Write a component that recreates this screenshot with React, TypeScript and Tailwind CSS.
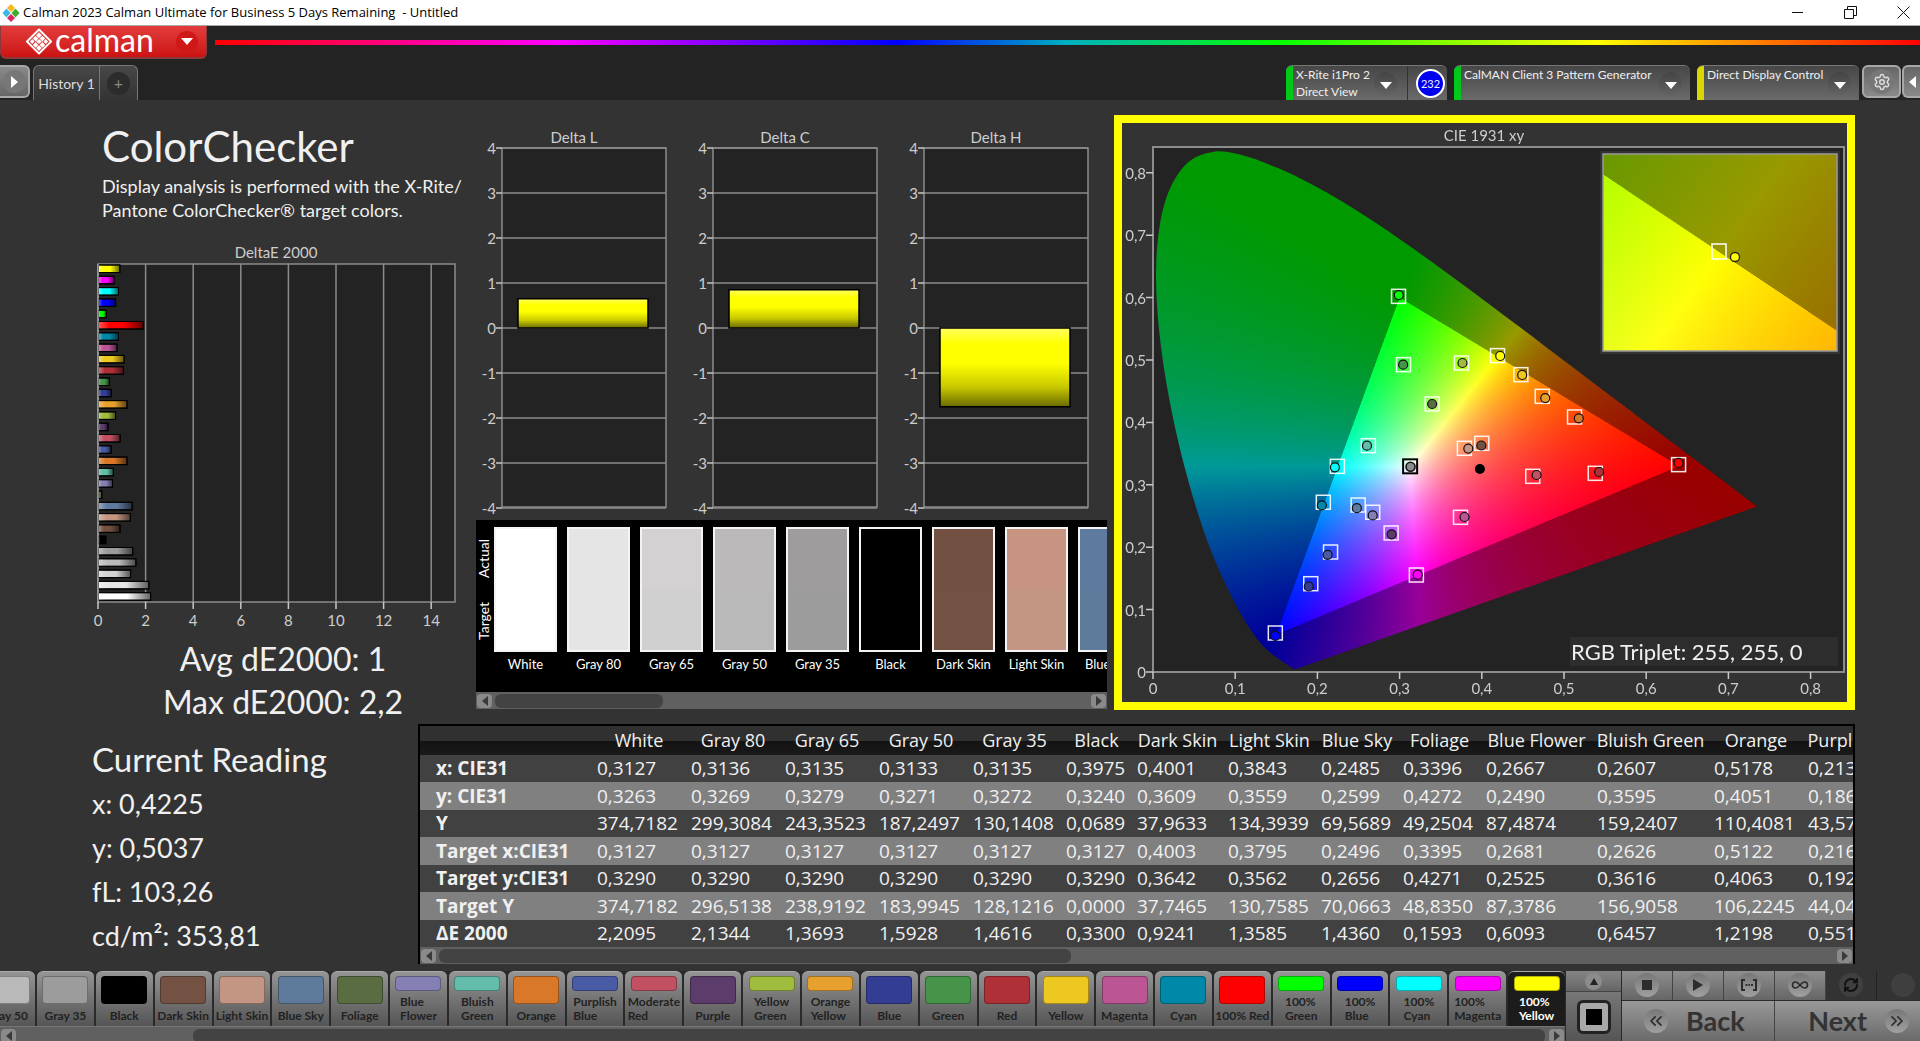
import { useEffect, useRef } from "react";
import { ChevronsLeft, ChevronsRight, Infinity as InfinityIcon, RefreshCw, Settings } from "lucide-react";

type Point = [number, number];

const CALIBRI = "font-['Lato',sans-serif]";
const SEGOE = "font-['Open_Sans',sans-serif]";

/* ---------- data ---------- */

const deltaE: [string, number][] = [
  ["#ffff00", 0.92], ["#ff00ff", 0.68], ["#00ffff", 0.86], ["#0000ff", 0.74], ["#00ff00", 0.35],
  ["#ff0000", 1.9], ["#0088a8", 0.86], ["#bb5593", 0.8], ["#edc820", 1.1], ["#b03038", 1.07],
  ["#46944a", 0.48], ["#333d94", 0.56], ["#e6a02e", 1.22], ["#a0bc3f", 0.74], ["#5c3c6a", 0.42],
  ["#c15162", 0.93], ["#4a5ba5", 0.5513], ["#d87828", 1.2198], ["#64bdaa", 0.6457], ["#8480b3", 0.6093],
  ["#596c42", 0.1593], ["#5e7a9e", 1.436], ["#c49682", 1.3585], ["#735142", 0.9241], ["#000000", 0.33],
  ["#9c9c9c", 1.4616], ["#bababa", 1.5928], ["#d2d2d2", 1.3693], ["#e6e6e6", 2.1344], ["#ffffff", 2.2095],
];

const swatches = [
  { name: "White", actual: "#ffffff", target: "#ffffff" },
  { name: "Gray 80", actual: "#e6e5e5", target: "#e5e5e5" },
  { name: "Gray 65", actual: "#d3d1d2", target: "#d0d0d0" },
  { name: "Gray 50", actual: "#bbb9ba", target: "#b9b9b9" },
  { name: "Gray 35", actual: "#9f9c9d", target: "#9c9c9c" },
  { name: "Black", actual: "#000000", target: "#000000" },
  { name: "Dark Skin", actual: "#735142", target: "#735244" },
  { name: "Light Skin", actual: "#c69481", target: "#c29682" },
  { name: "Blue Sky", actual: "#5e7a9f", target: "#5e7b9c" },
];

const columns = ["White", "Gray 80", "Gray 65", "Gray 50", "Gray 35", "Black", "Dark Skin", "Light Skin", "Blue Sky", "Foliage", "Blue Flower", "Bluish Green", "Orange", "Purplish Blue"];
const columnWidths = [94, 94, 94, 94, 93, 71, 91, 93, 82, 83, 111, 117, 94, 120];

const rows: [string, string[]][] = [
  ["x: CIE31", ["0,3127", "0,3136", "0,3135", "0,3133", "0,3135", "0,3975", "0,4001", "0,3843", "0,2485", "0,3396", "0,2667", "0,2607", "0,5178", "0,2131"]],
  ["y: CIE31", ["0,3263", "0,3269", "0,3279", "0,3271", "0,3272", "0,3240", "0,3609", "0,3559", "0,2599", "0,4272", "0,2490", "0,3595", "0,4051", "0,1861"]],
  ["Y", ["374,7182", "299,3084", "243,3523", "187,2497", "130,1408", "0,0689", "37,9633", "134,3939", "69,5689", "49,2504", "87,4874", "159,2407", "110,4081", "43,5713"]],
  ["Target x:CIE31", ["0,3127", "0,3127", "0,3127", "0,3127", "0,3127", "0,3127", "0,4003", "0,3795", "0,2496", "0,3395", "0,2681", "0,2626", "0,5122", "0,2161"]],
  ["Target y:CIE31", ["0,3290", "0,3290", "0,3290", "0,3290", "0,3290", "0,3290", "0,3642", "0,3562", "0,2656", "0,4271", "0,2525", "0,3616", "0,4063", "0,1921"]],
  ["Target Y", ["374,7182", "296,5138", "238,9192", "183,9945", "128,1216", "0,0000", "37,7465", "130,7585", "70,0663", "48,8350", "87,3786", "156,9058", "106,2245", "44,0413"]],
  ["ΔE 2000", ["2,2095", "2,1344", "1,3693", "1,5928", "1,4616", "0,3300", "0,9241", "1,3585", "1,4360", "0,1593", "0,6093", "0,6457", "1,2198", "0,5513"]],
];

const patches: [string, string][] = [
  ["Gray 50", "#b9b9b9"], ["Gray 35", "#9c9c9c"], ["Black", "#000000"], ["Dark Skin", "#735244"], ["Light Skin", "#c29682"],
  ["Blue Sky", "#5e7b9c"], ["Foliage", "#596c42"], ["Blue\nFlower", "#8480b3"], ["Bluish\nGreen", "#64bdaa"], ["Orange", "#d87828"],
  ["Purplish\nBlue", "#4a5ba5"], ["Moderate\nRed", "#c15162"], ["Purple", "#5c3c6a"], ["Yellow\nGreen", "#a0bc3f"], ["Orange\nYellow", "#e6a02e"],
  ["Blue", "#333d94"], ["Green", "#46944a"], ["Red", "#b03038"], ["Yellow", "#edc820"], ["Magenta", "#bb5593"],
  ["Cyan", "#0088a8"], ["100% Red", "#ff0000"], ["100%\nGreen", "#00ff00"], ["100%\nBlue", "#0000ff"], ["100%\nCyan", "#00ffff"],
  ["100%\nMagenta", "#ff00ff"], ["100%\nYellow", "#ffff00"],
];

/* target point, measured point, colour */
const markers: [Point, Point, string][] = [
  [[0.2987, 0.602], [0.299, 0.604], "#00ff00"],
  [[0.3048, 0.4925], [0.3043, 0.4925], "#46944a"],
  [[0.3753, 0.4952], [0.3765, 0.4952], "#a0bc3f"],
  [[0.4191, 0.507], [0.4224, 0.5064], "#ffff00"],
  [[0.4475, 0.4765], [0.4491, 0.476], "#edc820"],
  [[0.4735, 0.4418], [0.4772, 0.439], "#e6a02e"],
  [[0.5128, 0.4087], [0.518, 0.4065], "#d87828"],
  [[0.3396, 0.4295], [0.3396, 0.4295], "#596c42"],
  [[0.262, 0.3627], [0.2603, 0.3627], "#64bdaa"],
  [[0.3788, 0.3585], [0.3836, 0.358], "#c49682"],
  [[0.4, 0.3665], [0.3994, 0.363], "#735142"],
  [[0.2243, 0.3296], [0.2213, 0.328], "#00ffff"],
  [[0.462, 0.3136], [0.4667, 0.3157], "#c15162"],
  [[0.538, 0.3184], [0.5427, 0.3205], "#b03038"],
  [[0.6394, 0.3323], [0.6394, 0.335], "#ff0000"],
  [[0.2072, 0.272], [0.2054, 0.267], "#0088a8"],
  [[0.2496, 0.2676], [0.248, 0.2626], "#5e7a9e"],
  [[0.2673, 0.256], [0.2673, 0.251], "#8480b3"],
  [[0.2897, 0.2228], [0.2903, 0.2207], "#5c3c6a"],
  [[0.3741, 0.2479], [0.379, 0.2484], "#bb5593"],
  [[0.216, 0.1923], [0.2124, 0.1878], "#4a5ba5"],
  [[0.1919, 0.1415], [0.1895, 0.137], "#333d94"],
  [[0.3204, 0.1554], [0.322, 0.156], "#ff00ff"],
  [[0.1488, 0.0625], [0.1488, 0.058], "#0000ff"],
];

const locus: Point[] = [
  [0.1741, 0.005], [0.1733, 0.0048], [0.1714, 0.0051], [0.1689, 0.0069], [0.1644, 0.0109], [0.1566, 0.0177],
  [0.151, 0.0227], [0.144, 0.0297], [0.1355, 0.0399], [0.1241, 0.0578], [0.1096, 0.0868], [0.0913, 0.1327],
  [0.0687, 0.2007], [0.0454, 0.295], [0.0235, 0.4127], [0.0082, 0.5384], [0.0039, 0.6548], [0.0139, 0.7502],
  [0.0389, 0.812], [0.0743, 0.8338], [0.1142, 0.8262], [0.1547, 0.8059], [0.1929, 0.7816], [0.2296, 0.7543],
  [0.2658, 0.7243], [0.3016, 0.6923], [0.3373, 0.6589], [0.3731, 0.6245], [0.4087, 0.5896], [0.4441, 0.5547],
  [0.4788, 0.5202], [0.5125, 0.4866], [0.5448, 0.4544], [0.5752, 0.4242], [0.6029, 0.3965], [0.627, 0.3725],
  [0.6482, 0.3514], [0.6658, 0.334], [0.6915, 0.3083], [0.7079, 0.292], [0.719, 0.2809], [0.726, 0.274], [0.7347, 0.2653],
];

/* ---------- chromaticity chart ---------- */

const CIE_W = 725;
const CIE_H = 579;
const PLOT = { x: 31, y: 24, w: 691, h: 525 };
const cx = (x: number) => 31 + x * 822;
const cy = (y: number) => 549 - y * 624;
const INSET = { x: 481, y: 31, w: 234, h: 197, u: 0.4193, v: 0.5053, span: 0.05 };

function chroma(x: number, y: number): [number, number, number] {
  const X = x / y;
  const Z = (1 - x - y) / y;
  const r = 3.2406 * X - 1.5372 - 0.4986 * Z;
  const g = -0.9689 * X + 1.8758 + 0.0415 * Z;
  const b = 0.0557 * X - 0.204 + 1.057 * Z;
  const k = (Math.min(r, g, b) < 0 ? 153 : 255) / Math.max(r, g, b);
  return [Math.max(0, r * k), Math.max(0, g * k), Math.max(0, b * k)];
}

function paint(w: number, h: number, toXY: (px: number, py: number) => Point) {
  const s = 2;
  const off = document.createElement("canvas");
  off.width = w * s;
  off.height = h * s;
  const ctx = off.getContext("2d")!;
  const img = ctx.createImageData(w * s, h * s);
  for (let j = 0; j < h * s; j++) {
    for (let i = 0; i < w * s; i++) {
      const [x, y] = toXY((i + 0.5) / s, (j + 0.5) / s);
      const c = chroma(x, Math.max(y, 0.0005));
      const o = (j * w * s + i) * 4;
      img.data[o] = c[0];
      img.data[o + 1] = c[1];
      img.data[o + 2] = c[2];
      img.data[o + 3] = 255;
    }
  }
  ctx.putImageData(img, 0, 0);
  return off;
}

function GamutCanvas() {
  const ref = useRef<HTMLCanvasElement>(null);
  useEffect(() => {
    const ctx = ref.current!.getContext("2d")!;
    ctx.clearRect(0, 0, CIE_W, CIE_H);
    ctx.fillStyle = "#232323";
    ctx.fillRect(PLOT.x, PLOT.y, PLOT.w, PLOT.h);
    const p = locus.map(([x, y]) => [cx(x), cy(y)] as Point);
    ctx.save();
    ctx.beginPath();
    ctx.moveTo(p[0][0], p[0][1]);
    for (let i = 0; i < p.length - 1; i++) {
      const a = p[Math.max(0, i - 1)];
      const b = p[i];
      const c = p[i + 1];
      const d = p[Math.min(p.length - 1, i + 2)];
      ctx.bezierCurveTo(b[0] + (c[0] - a[0]) / 6, b[1] + (c[1] - a[1]) / 6, c[0] - (d[0] - b[0]) / 6, c[1] - (d[1] - b[1]) / 6, c[0], c[1]);
    }
    ctx.closePath();
    ctx.clip();
    ctx.drawImage(paint(CIE_W, CIE_H, (px, py) => [(px - 31) / 822, (549 - py) / 624]), 0, 0, CIE_W, CIE_H);
    ctx.restore();
    ctx.fillStyle = "#333333";
    ctx.fillRect(INSET.x - 3, INSET.y - 3, INSET.w + 6, INSET.h + 6);
    const zoomed = paint(INSET.w, INSET.h, (px, py) => [
      INSET.u + (px / INSET.w - 0.5) * INSET.span,
      INSET.v - (py / INSET.h - 0.5) * INSET.span,
    ]);
    ctx.drawImage(zoomed, INSET.x, INSET.y, INSET.w, INSET.h);
  }, []);
  return <canvas ref={ref} width={CIE_W} height={CIE_H} className="block w-full" />;
}

function CieChart() {
  const ticks = [0, 1, 2, 3, 4, 5, 6, 7, 8];
  return (
    <section className="relative border-8 border-[#ffff00] bg-[#333333]">
      <GamutCanvas />
      <svg viewBox="0 0 725 579" className={`absolute inset-0 h-full w-full ${CALIBRI}`} fill="#cdcdcd" fontSize="15">
        <text x="362" y="18" textAnchor="middle">CIE 1931 xy</text>
        <rect x="31" y="24" width="691" height="525" fill="none" stroke="#8c8c8c" strokeWidth="2" />
        {ticks.map((t) => (
          <g key={t}>
            <path d={`M${cx(t / 10)} 549v7M31 ${cy(t / 10)}h-7`} stroke="#c8c8c8" strokeWidth="1.5" />
            <text x={cx(t / 10)} y="571" textAnchor="middle">{t ? `0,${t}` : "0"}</text>
            <text x="24" y={cy(t / 10) + 6} textAnchor="end">{t ? `0,${t}` : "0"}</text>
          </g>
        ))}
        {markers.map(([t, m, c], i) => (
          <g key={i}>
            <rect x={cx(t[0]) - 7} y={cy(t[1]) - 7} width="14" height="14" fill="none" stroke="#fff" strokeOpacity="0.9" strokeWidth="1.5" />
            <circle cx={cx(m[0])} cy={cy(m[1])} r="4.5" fill={c} stroke="#111" strokeWidth="1.2" />
          </g>
        ))}
        <rect x={cx(0.3128) - 7} y={cy(0.3296) - 7} width="14" height="14" fill="none" stroke="#000" strokeWidth="2" />
        <circle cx={cx(0.3133)} cy={cy(0.329)} r="4.5" fill="#8c8c8c" stroke="#111" strokeWidth="1.6" />
        <circle cx={cx(0.3977)} cy={cy(0.3253)} r="5" fill="#000" />
        <rect x={INSET.x} y={INSET.y} width={INSET.w} height={INSET.h} fill="none" stroke="#9a9a9a" strokeWidth="1.5" />
        <rect x="590" y="121" width="14" height="15" fill="none" stroke="#fff" strokeWidth="1.5" />
        <circle cx="613" cy="134" r="4.5" fill="#ffff00" stroke="#222" strokeWidth="1.3" />
        <rect x="448" y="514" width="268" height="29" fill="#2d2d2d" />
        <text x="449" y="537" fontSize="22" fill="#f0f0f0">RGB Triplet: 255, 255, 0</text>
      </svg>
    </section>
  );
}

/* ---------- bar charts ---------- */

function DeltaEChart() {
  return (
    <svg viewBox="80 240 396 392" className={`block w-full ${CALIBRI}`} fill="#cdcdcd" fontSize="15">
      <defs>
        <linearGradient id="barShade">
          <stop offset="0" stopColor="#fff" stopOpacity="0.35" />
          <stop offset="0.25" stopColor="#fff" stopOpacity="0" />
          <stop offset="0.55" stopColor="#000" stopOpacity="0" />
          <stop offset="1" stopColor="#000" stopOpacity="0.6" />
        </linearGradient>
      </defs>
      <text x="276" y="259" textAnchor="middle">DeltaE 2000</text>
      <rect x="98" y="265" width="357" height="338" fill="#232323" stroke="#8c8c8c" strokeWidth="1.5" />
      {[0, 2, 4, 6, 8, 10, 12, 14].map((t) => (
        <g key={t}>
          <path d={`M${98 + t * 23.8} 265V603`} stroke="#8c8c8c" strokeWidth="1.5" />
          <path d={`M${98 + t * 23.8} 603v7`} stroke="#c8c8c8" strokeWidth="1.5" />
          <text x={98 + t * 23.8} y="627" textAnchor="middle">{t}</text>
        </g>
      ))}
      {deltaE.map(([c, v], i) => (
        <g key={i} stroke="#000" strokeWidth="1">
          <rect x="98.5" y={266 + i * 11.3} width={v * 23.8 - 0.5} height="7.5" fill={c} />
          <rect x="98.5" y={266 + i * 11.3} width={v * 23.8 - 0.5} height="7.5" fill="url(#barShade)" />
        </g>
      ))}
      <path d="M98 265V603" stroke="#9a9a9a" strokeWidth="1.5" />
    </svg>
  );
}

function DeltaCharts() {
  const charts: [string, number, number][] = [["Delta L", 0, 0.65], ["Delta C", 211, 0.85], ["Delta H", 422, -1.75]];
  return (
    <svg viewBox="476 120 638 400" className={`block w-full ${CALIBRI}`} fill="#cdcdcd" fontSize="15">
      <defs>
        <linearGradient id="yellowBar" x1="0" y1="0" x2="0" y2="1">
          <stop offset="0" stopColor="#ffff60" />
          <stop offset="0.2" stopColor="#ffff00" />
          <stop offset="0.45" stopColor="#ffff00" />
          <stop offset="0.75" stopColor="#c8c800" />
          <stop offset="1" stopColor="#6a6a00" />
        </linearGradient>
      </defs>
      {charts.map(([name, dx, v]) => (
        <g key={name} transform={`translate(${dx} 0)`}>
          <text x="574" y="143" textAnchor="middle">{name}</text>
          <rect x="502" y="148" width="164" height="359" fill="#232323" stroke="#8c8c8c" strokeWidth="1.5" />
          {[4, 3, 2, 1, 0, -1, -2, -3, -4].map((t) => (
            <g key={t}>
              <path d={`M502 ${328 - t * 45}H666`} stroke="#8c8c8c" strokeWidth="1.5" />
              <path d={`M496 ${328 - t * 45}h6`} stroke="#c8c8c8" strokeWidth="1.5" />
              <text x="496" y={334 - t * 45} textAnchor="end">{t}</text>
            </g>
          ))}
          <rect x="518" y={v > 0 ? 328 - v * 45 : 328} width="130" height={Math.abs(v) * 45} fill="url(#yellowBar)" stroke="#000" strokeWidth="1.5" />
        </g>
      ))}
    </svg>
  );
}

/* ---------- small parts ---------- */

function ArrowButton({ dir }: { dir: "left" | "right" }) {
  return (
    <button aria-label={`Scroll ${dir}`} className="grid h-[14px] w-[15px] flex-none place-items-center rounded-sm bg-[#8a8a8a]">
      <svg viewBox="0 0 6 10" className="h-[10px] w-[6px]" fill="#3a3a3a">
        <path d={dir === "left" ? "M6 0v10L0 5z" : "M0 0v10l6-5z"} />
      </svg>
    </button>
  );
}

function ScrollBar({ before, thumb, after }: { before: number; thumb: number; after: number }) {
  return (
    <div className="flex h-[17px] items-center gap-[3px] bg-[#606060] px-px">
      <ArrowButton dir="left" />
      <div className="flex h-[14px] flex-1">
        <div style={{ flexGrow: before }} />
        <div className="rounded-md bg-[#434343]" style={{ flexGrow: thumb }} />
        <div style={{ flexGrow: after }} />
      </div>
      <ArrowButton dir="right" />
    </div>
  );
}

function DropArrow() {
  return (
    <span className="grid h-[23px] w-[23px] flex-none place-items-center rounded-full bg-linear-to-b from-[#444] to-[#636363]">
      <svg viewBox="0 0 12 7" className="mt-1 h-[7px] w-[12px]" fill="#fff"><path d="M0 0h12L6 7z" /></svg>
    </span>
  );
}

const deviceBox = "flex h-[35px] flex-none overflow-hidden rounded-t-md border-t border-[#777] bg-linear-to-b from-[#474747] to-[#6a6a6a] text-left text-[12px] leading-[17px] whitespace-nowrap text-[#f0f0f0]";
const squareBtn = "grid h-[33px] flex-none place-items-center rounded-md border-2 border-[#a8a8a8] bg-linear-to-b from-[#666] to-[#8a8a8a]";
const roundBtn = "grid h-[24px] w-[24px] place-items-center rounded-full bg-linear-to-b from-[#777] to-[#a0a0a0] text-[#2c2c2c]";
const mediaBtn = "grid place-items-center border-r border-[#444] bg-linear-to-b from-[#8e8e8e] to-[#666]";

function TitleBar() {
  return (
    <div className={`flex h-[26px] items-center border-b border-[#aaa] bg-white text-black ${SEGOE}`}>
      <svg viewBox="0 0 18 18" className="ml-[2px] h-[18px] w-[18px]">
        <path d="M9 0l4 4-4 4-4-4z" fill="#f9b81a" />
        <path d="M4.500 4.500l4 4.500-4 4.500L.5 9z" fill="#3fb6e8" />
        <path d="M13.500 4.500l4 4.500-4 4.500-4-4.500z" fill="#3fae2a" />
        <path d="M9 10l4 4-4 4-4-4z" fill="#e0245e" />
      </svg>
      <h1 className="ml-[3px] flex-1 text-[13px] whitespace-pre">Calman 2023 Calman Ultimate for Business 5 Days Remaining  - Untitled</h1>
      <div className="flex gap-[40px] pr-[10px]">
        <button aria-label="Minimize"><svg viewBox="0 0 13 13" className="h-[13px] w-[13px]" fill="none" stroke="#111"><path d="M1 6.500h11" /></svg></button>
        <button aria-label="Restore"><svg viewBox="0 0 13 13" className="h-[13px] w-[13px]" fill="none" stroke="#111"><path d="M.5 3.500h9v9h-9zM3.500 3.500v-3h9v9h-3" /></svg></button>
        <button aria-label="Close"><svg viewBox="0 0 13 13" className="h-[13px] w-[13px]" fill="none" stroke="#111"><path d="M.5.5l12 12M12.500.5l-12 12" /></svg></button>
      </div>
    </div>
  );
}

function Header() {
  return (
    <header className="bg-[#232323]">
      <div className="flex h-[39px] items-start gap-2">
        <button aria-label="Calman menu" className="flex h-[33px] w-[207px] flex-none items-center rounded-b-md border-x border-b-2 border-[#8a3a3a] bg-linear-to-b from-[#e23b3b] to-[#cc1111] pl-[24px]">
          <svg viewBox="0 0 28 28" className="h-[27px] w-[28px]" fill="none" stroke="#fff">
            <path d="M14 1.500L26.500 14 14 26.500 1.500 14z" strokeWidth="2" strokeLinejoin="round" />
            <g fill="#fff" stroke="none">
              <path d="M14 4.500l3 3-3 3-3-3zM10.500 8l3 3-3 3-3-3zM17.500 8l3 3-3 3-3-3zM7 11.500l2.500 2.500L7 16.500 4.500 14zM14 11.300l3 2.700-3 2.700-3-2.700zM21 11.500l2.500 2.500-2.500 2.500-2.500-2.500zM10.500 14.500l3 3-3 3-3-3zM17.500 14.500l3 3-3 3-3-3zM14 17.800l3 3-3 3-3-3z" />
            </g>
          </svg>
          <span className={`ml-0.5 pb-1 text-[32px] leading-[29px] text-white ${CALIBRI}`}>calman</span>
          <span className="mr-[8px] ml-auto grid h-[22px] w-[22px] place-items-center rounded-full bg-[#d01818]">
            <svg viewBox="0 0 12 7" className="h-[7px] w-[12px]" fill="#fff"><path d="M0 0h12L6 7z" /></svg>
          </span>
        </button>
        <div className="mt-[14px] h-[5px] flex-1 bg-[linear-gradient(90deg,#ff0000_0%,#ff00ff_20%,#0000ff_40%,#00b0c0_50%,#00ff00_62%,#ffff00_81%,#ff0000_100%)]" />
      </div>
      <div className={`flex h-[35px] items-start ${CALIBRI}`}>
        <button aria-label="Expand" className="mr-[3px] flex h-[33px] w-[30px] items-center justify-center rounded-r-md border-2 border-l-0 border-[#a8a8a8] bg-linear-to-b from-[#8a8a8a] to-[#666]">
          <span className="grid h-[23px] w-[23px] place-items-center rounded-full bg-[#777]">
            <svg viewBox="0 0 7 12" className="h-[12px] w-[7px]" fill="#fff"><path d="M0 0v12l7-6z" /></svg>
          </span>
        </button>
        <div className="flex h-[35px] overflow-hidden rounded-t-md border border-b-0 border-[#777] bg-linear-to-b from-[#484848] to-[#333]">
          <button className="w-[66px] border-r border-[#777] text-[14px] text-[#dcdcdc]">History 1</button>
          <button aria-label="Add" className="grid w-[37px] place-items-center">
            <span className="grid h-[23px] w-[23px] place-items-center rounded-full bg-[#2c2c2c] text-[16px] leading-none text-[#888]">+</span>
          </button>
        </div>
        <div className="flex-1" />
        <button className={`${deviceBox} mr-[7px] w-[161px]`}>
          <span className="w-[7px] flex-none bg-[#00c818]" />
          <span className="flex-1 pl-[3px]">X-Rite i1Pro 2<br />Direct View</span>
          <span className="flex items-center"><DropArrow /></span>
          <span className="ml-[10px] flex items-center border-l border-[#333] pr-[2px] pl-[8px]">
            <span className="grid h-[29px] w-[29px] place-items-center rounded-full border-2 border-white bg-[#0000f0] text-[11px]">232</span>
          </span>
        </button>
        <button className={`${deviceBox} mr-[7px] w-[236px] pr-2`}>
          <span className="w-[7px] flex-none bg-[#00c818]" />
          <span className="flex-1 pl-[3px]">CalMAN Client 3 Pattern Generator</span>
          <span className="flex items-center"><DropArrow /></span>
        </button>
        <button className={`${deviceBox} mr-[3px] w-[162px] pr-2`}>
          <span className="w-[7px] flex-none bg-[#d8d800]" />
          <span className="flex-1 pl-[3px]">Direct Display Control</span>
          <span className="flex items-center"><DropArrow /></span>
        </button>
        <button aria-label="Settings" className={`${squareBtn} mr-px w-[39px]`}>
          <span className="grid h-[25px] w-[25px] place-items-center rounded-full bg-[#777]"><Settings size={18} color="#ddd" /></span>
        </button>
        <button aria-label="Collapse" className={`${squareBtn} w-[18px] rounded-r-none border-r-0`}>
          <svg viewBox="0 0 7 12" className="h-[12px] w-[7px]" fill="#fff"><path d="M7 0v12L0 6z" /></svg>
        </button>
      </div>
    </header>
  );
}

function SwatchStrip() {
  return (
    <section className={`mr-[7px] overflow-hidden bg-black text-[14px] text-white ${CALIBRI}`}>
      <div className="flex h-[172px] pt-[7px]">
        <div className="flex h-[125px] w-[18px] flex-none rotate-180 justify-around text-center leading-[16px] [writing-mode:vertical-rl]">
          <span>Target</span>
          <span>Actual</span>
        </div>
        <div className="flex flex-1 gap-[10px] overflow-hidden">
          {swatches.map((s) => (
            <div key={s.name} className="w-[63px] flex-none text-center whitespace-nowrap">
              <div className="flex h-[125px] flex-col border-2 border-[#f4f4f4]">
                <div className="flex-1" style={{ background: s.actual }} />
                <div className="flex-1" style={{ background: s.target }} />
              </div>
              <div className="text-[13px] leading-[24px]">{s.name}</div>
            </div>
          ))}
        </div>
      </div>
      <ScrollBar before={0} thumb={169} after={426} />
    </section>
  );
}

function DataTable() {
  return (
    <section className={`min-w-0 border-2 border-b-0 border-black ${SEGOE}`}>
      <div className="overflow-hidden">
        <table className="w-[1503px] table-fixed border-collapse text-left text-[19px] leading-[27px] text-[#f0f0f0]">
          <colgroup>
            <col className="w-[172px]" />
            {columnWidths.map((w, i) => <col key={i} style={{ width: w }} />)}
          </colgroup>
          <thead>
            <tr className="h-[29px] bg-[linear-gradient(#303030_50%,#121212_50%,#1a1a1a)] text-[18px] whitespace-nowrap">
              <td />
              {columns.map((c) => <th key={c} scope="col" className="p-0 text-center font-normal">{c}</th>)}
            </tr>
          </thead>
          <tbody>
            {rows.map(([name, cells]) => (
              <tr key={name} className="h-[27px] bg-[#414141] even:h-[28px] even:bg-[#808080]">
                <th scope="row" className="p-0 pl-4 font-bold whitespace-nowrap">{name}</th>
                {cells.map((c, i) => <td key={i} className="p-0 pl-[5px]">{c}</td>)}
              </tr>
            ))}
          </tbody>
        </table>
      </div>
      <ScrollBar before={0} thumb={630} after={760} />
    </section>
  );
}

function Footer() {
  return (
    <footer className={`flex h-[70px] bg-[#2a2a2a] ${CALIBRI}`}>
      <div className="flex min-w-0 flex-1 flex-col pr-px">
        <div className="grid h-[55px] grid-cols-[35px_repeat(26,minmax(0,1fr))] gap-x-[2px]">
          {patches.map(([name, color], i) => {
            const active = i === patches.length - 1;
            return (
              <div key={name} className="flex justify-end overflow-hidden">
                <button className={`flex h-[55px] w-full min-w-[56px] flex-col items-center overflow-hidden rounded-t-md border-t border-[#aaa] pt-1 pb-[3px] text-[12px] leading-[14px] font-bold ${active ? "bg-[#1c1c1c] text-white" : "bg-linear-to-b from-[#959595] to-[#555] text-[#222]"}`}>
                  <span className={`w-[46px] flex-none rounded-sm border border-black/30 ${name.includes("\n") ? "h-[15px]" : "h-[28px]"}`} style={{ background: color }} />
                  <span className="mt-auto text-left whitespace-pre">{name}</span>
                </button>
              </div>
            );
          })}
        </div>
        <div className="h-[15px] overflow-hidden border-t border-[#777]">
          <ScrollBar before={172} thumb={1340} after={1} />
        </div>
      </div>
      <div className="flex w-[55px] flex-none flex-col bg-[#777]">
        <button aria-label="Up" className="grid h-[21px] place-items-center border-b border-[#444] bg-linear-to-b from-[#858585] to-[#666]">
          <span className="grid h-[17px] w-[17px] place-items-center rounded-full bg-[#8c8c8c]">
            <svg viewBox="0 0 8 7" className="h-[7px] w-[8px]" fill="#222"><path d="M4 0l4 7H0z" /></svg>
          </span>
        </button>
        <button aria-label="Pattern window" className="grid flex-1 place-items-center bg-linear-to-b from-[#777] to-[#555]">
          <span className="grid h-[34px] w-[34px] place-items-center rounded-md border-3 border-[#222] bg-[#a8a8a8]">
            <span className="h-[16px] w-[16px] bg-black" />
          </span>
        </button>
      </div>
      <div className="ml-px flex w-[298px] flex-none flex-col overflow-hidden">
        <div className="grid h-[34px] grid-cols-[51px_51px_51px_51px_51px_51px]">
          <button aria-label="Stop" className={mediaBtn}><span className={roundBtn}><span className="h-[10px] w-[10px] bg-[#2c2c2c]" /></span></button>
          <button aria-label="Play" className={mediaBtn}><span className={roundBtn}><svg viewBox="0 0 10 12" className="h-[12px] w-[10px]" fill="#2c2c2c"><path d="M0 0v12l10-6z" /></svg></span></button>
          <button aria-label="Read series" className={mediaBtn}>
            <span className={roundBtn}>
              <svg viewBox="0 0 16 12" className="h-[12px] w-[16px]" fill="none" stroke="#2c2c2c" strokeWidth="2"><path d="M4 1H1v10h3M12 1h3v10h-3M4.500 6h2M7.500 6h1.500M10 6h2" /></svg>
            </span>
          </button>
          <button aria-label="Read continuously" className={mediaBtn}><span className={roundBtn}><InfinityIcon size={18} /></span></button>
          <button aria-label="Refresh" className="grid place-items-center border-r border-[#222] bg-[#333]"><span className="grid h-[24px] w-[24px] place-items-center rounded-full bg-[#404040] text-[#111]"><RefreshCw size={16} strokeWidth={3} /></span></button>
          <button aria-label="More" className="grid place-items-center bg-[#333]"><span className="h-[24px] w-[24px] rounded-full bg-[#3f3f3f]" /></button>
        </div>
        <div className="mt-px grid flex-1 grid-cols-[153px_1fr] text-[27px] font-bold text-[#333]">
          <button className="flex items-center gap-[18px] border-r border-[#444] bg-linear-to-b from-[#999] to-[#6a6a6a] pl-[22px]">
            <span className={roundBtn}><ChevronsLeft size={20} /></span>Back
          </button>
          <button className="flex items-center justify-end gap-[18px] bg-linear-to-b from-[#999] to-[#6a6a6a] pr-[11px]">
            Next<span className={roundBtn}><ChevronsRight size={20} /></span>
          </button>
        </div>
      </div>
    </footer>
  );
}

export default function App() {
  return (
    <div className="flex min-h-screen flex-col overflow-hidden bg-[#333333]">
      <TitleBar />
      <Header />
      <main className="flex-1">
        <div className="grid grid-cols-[minmax(0,476fr)_minmax(0,638fr)_minmax(0,741fr)_minmax(0,65fr)] items-start">
          <div className={`pb-px text-[#f0f0f0] ${CALIBRI}`}>
            <h2 className="mt-[18px] pl-[102px] text-[42px] leading-[56px]">ColorChecker</h2>
            <p className="h-[65px] pl-[102px] text-[18px] leading-[24px] whitespace-nowrap">Display analysis is performed with the X-Rite/<br />Pantone ColorChecker® target colors.</p>
            <div className="pl-[80px]"><DeltaEChart /></div>
            <div className="mt-[6px] pl-[90px] text-center text-[32px] leading-[43px]">
              <div>Avg dE2000: 1</div>
              <div>Max dE2000: 2,2</div>
            </div>
          </div>
          <div className="pt-[20px]">
            <DeltaCharts />
            <SwatchStrip />
          </div>
          <div className="pt-[15px]"><CieChart /></div>
        </div>
        <div className="grid grid-cols-[418px_minmax(0,1fr)_65px]">
          <div className={`pl-[92px] text-[27px] text-[#f0f0f0] ${CALIBRI}`}>
            <h2 className="pt-[12px] text-[33px] leading-[46px]">Current Reading</h2>
            <div className="leading-[44px]">
              <div>x: 0,4225</div>
              <div>y: 0,5037</div>
              <div>fL: 103,26</div>
              <div>cd/m²: 353,81</div>
            </div>
          </div>
          <DataTable />
        </div>
      </main>
      <Footer />
    </div>
  );
}
